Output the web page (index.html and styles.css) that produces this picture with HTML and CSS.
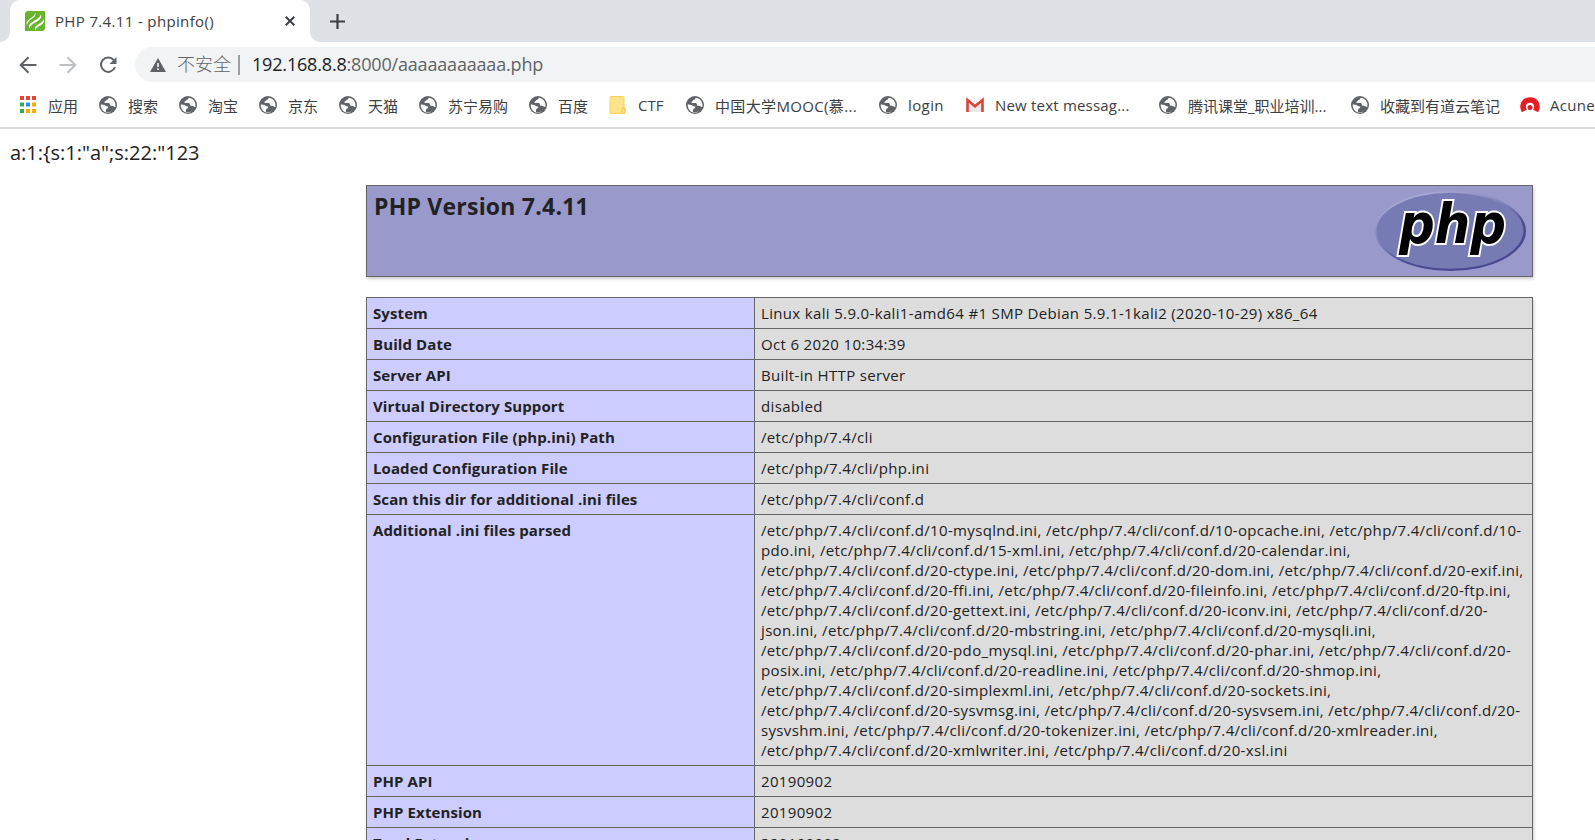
FILE: index.html
```html
<!DOCTYPE html>
<html lang="zh-CN">
<head>
    <meta charset="UTF-8">
    <title>PHP 7.4.11 - phpinfo()</title>
    <link rel="stylesheet" href="styles.css">
</head>
<body>
    <svg class="defs" width="0" height="0">
        <symbol id="globe" viewBox="0 0 18 18">
            <circle cx="9" cy="9" r="9" fill="#5f6368"/>
            <path d="M9.600 1.700c-.2 1.500-1.100 2.100-2.500 2.300-.3 1.300-.8 1.700-1.900 1.800.2 1 .8 1.300 1.900 1.300h2.300c1.600.1 1.500 1.500 1.700 2.400 1.100.3 2.500.1 3.600 1.100.9.700 1.500.6 1.700-.2C17 6 14.400 2.200 9.600 1.700zM1.700 8.500c1.500.1 3.300.3 4.600 1.100 1.100.6 1.500 1 2.900 1 .3 1.200-.5 2-1.800 2.200-.2 1.200-.6 2-.4 3.200 2 .7 4 .3 5.700-.8l-1.200 1.100C6.500 18 1.600 14.500 1.700 8.500z" fill="#fff"/>
        </symbol>
    </svg>

    <div class="tab-strip">
        <div class="tab-edge"></div>
        <div class="tab">
            <svg class="favicon" viewBox="0 0 20 20">
                <path d="M2 0h18v18l-2 2H0V2z" fill="#69b42e"/>
                <path d="M10.300 2c1.700 5-6.800 5-8.300 12C-.5 8.500 8.500 8 10.300 2zM16 3.500c2.500 7-9.500 7-11.500 14-3.500-6.500 9.500-7.500 11.500-14zM18.800 8c1.500 6.500-6.300 6-8.300 11.200C7.500 14 17 13.500 18.800 8z" fill="#fff"/>
            </svg>
            <span class="tab-title">PHP 7.4.11 - phpinfo()</span>
            <svg class="tab-close" viewBox="0 0 10 10"><path d="M.7.7l8.600 8.600M9.300.7L.7 9.300" stroke="#3c4043" stroke-width="2"/></svg>
        </div>
        <div class="tab-edge right"></div>
        <svg class="new-tab" viewBox="0 0 15 15"><path d="M7.500 0v15M0 7.500h15" stroke="#3c4043" stroke-width="2.200"/></svg>
    </div>

    <div class="toolbar">
        <svg class="nav-icon" viewBox="0 0 18 18"><path d="M17.500 9H2M9.500 1.200L1.700 9l7.800 7.800" fill="none" stroke="#5f6368" stroke-width="2"/></svg>
        <svg class="nav-icon" viewBox="0 0 18 18"><path d="M.5 9H16M8.500 1.200L16.300 9l-7.800 7.800" fill="none" stroke="#bdc1c6" stroke-width="2"/></svg>
        <svg class="nav-icon" viewBox="0 0 18 18"><path d="M14.800 4.200A7.200 7.200 0 1 0 16 11" fill="none" stroke="#5f6368" stroke-width="2"/><path d="M17.500 1v7H10.500z" fill="#5f6368"/></svg>
        <div class="address">
            <svg class="warning" viewBox="0 0 16 14"><path d="M8 0l8 14H0z" fill="#5f6368"/><path d="M8 5v4M8 10.300v1.800" stroke="#f1f3f4" stroke-width="1.600"/></svg>
            <span class="insecure">不安全</span>
            <span class="divider"></span>
            <span class="url"><span class="host">192.168.8.8</span>:8000/aaaaaaaaaaa.php</span>
        </div>
    </div>

    <div class="bookmarks">
        <div class="bookmark">
            <svg viewBox="0 0 18 18">
                <path d="M1 0h4v4H1zM7 0h4v4H7zM13 0h4v4h-4z" fill="#ea4335"/>
                <path d="M1 6.500h4v4H1zM1 13h4v4H1z" fill="#34a853"/>
                <path d="M7 6.500h4v4H7z" fill="#2a8cf0"/>
                <path d="M7 13h4v4H7zM13 6.500h4v4h-4zM13 13h4v4h-4z" fill="#f9ab00"/>
            </svg>
            <span>应用</span>
        </div>
        <div class="bookmark"><svg><use href="#globe"/></svg><span>搜索</span></div>
        <div class="bookmark"><svg><use href="#globe"/></svg><span>淘宝</span></div>
        <div class="bookmark"><svg><use href="#globe"/></svg><span>京东</span></div>
        <div class="bookmark"><svg><use href="#globe"/></svg><span>天猫</span></div>
        <div class="bookmark b-suning"><svg><use href="#globe"/></svg><span>苏宁易购</span></div>
        <div class="bookmark"><svg><use href="#globe"/></svg><span>百度</span></div>
        <div class="bookmark b-ctf">
            <svg viewBox="0 0 18 18"><path d="M2 .5h12q1 0 1 1V12h1v4.500q0 1-1 1H2q-1 0-1-1v-15q0-1 1-1z" fill="#ffe38a" stroke="#f7d160"/><path d="M13 17.500V13q0-1 1-1h2v4.500q0 1-1 1z" fill="#ffe38a" stroke="#f3c63f"/></svg>
            <span>CTF</span>
        </div>
        <div class="bookmark b-mooc"><svg><use href="#globe"/></svg><span>中国大学MOOC(慕...</span></div>
        <div class="bookmark b-login"><svg><use href="#globe"/></svg><span>login</span></div>
        <div class="bookmark b-mail">
            <svg viewBox="0 0 18 18"><path d="M1 3h16v13H1z" fill="#e9e9e9"/><path d="M1 3h16L9 9.500z" fill="#fafafa"/><path d="M1.500 16V4L9 10.300 16.500 4v12" fill="none" stroke="#db4437" stroke-width="2.600"/></svg>
            <span>New text messag...</span>
        </div>
        <div class="bookmark b-tencent"><svg><use href="#globe"/></svg><span>腾讯课堂_职业培训...</span></div>
        <div class="bookmark b-youdao"><svg><use href="#globe"/></svg><span>收藏到有道云笔记</span></div>
        <div class="bookmark b-acu">
            <svg viewBox="0 0 20 18"><path d="M4.300 15C1.300 9.500 4 4 10 4s8.700 5.500 5.700 11" fill="none" stroke="#e31e26" stroke-width="5.600"/><circle cx="10" cy="11.500" r="2.500" fill="#e31e26"/></svg>
            <span>Acune</span>
        </div>
    </div>

    <div class="page">
        <div class="output">a:1:{s:1:"a";s:22:"123</div>
        <div class="center">
            <div class="header">
                <h1>PHP Version 7.4.11</h1>
                <svg class="php-logo" viewBox="0 0 151 80">
                    <defs>
                        <linearGradient id="rim" x1="0.2" y1="0" x2="0.8" y2="1">
                            <stop offset="0" stop-color="#b4b5dc"/>
                            <stop offset="0.45" stop-color="#777bb3"/>
                            <stop offset="0.65" stop-color="#484990"/>
                            <stop offset="1" stop-color="#484990"/>
                        </linearGradient>
                    </defs>
                    <ellipse cx="75.500" cy="40" rx="75.500" ry="40" fill="url(#rim)"/>
                    <ellipse cx="75" cy="39.800" rx="73.500" ry="38" fill="#777bb3"/>
                    <text x="24" y="52" textLength="107" lengthAdjust="spacingAndGlyphs">php</text>
                </svg>
            </div>
            <table>
                <tr><td class="e">System</td><td class="v">Linux kali 5.9.0-kali1-amd64 #1 SMP Debian 5.9.1-1kali2 (2020-10-29) x86_64</td></tr>
                <tr><td class="e">Build Date</td><td class="v">Oct 6 2020 10:34:39</td></tr>
                <tr><td class="e">Server API</td><td class="v">Built-in HTTP server</td></tr>
                <tr><td class="e">Virtual Directory Support</td><td class="v">disabled</td></tr>
                <tr><td class="e">Configuration File (php.ini) Path</td><td class="v">/etc/php/7.4/cli</td></tr>
                <tr><td class="e">Loaded Configuration File</td><td class="v">/etc/php/7.4/cli/php.ini</td></tr>
                <tr><td class="e">Scan this dir for additional .ini files</td><td class="v">/etc/php/7.4/cli/conf.d</td></tr>
                <tr><td class="e">Additional .ini files parsed</td><td class="v">/etc/php/7.4/cli/conf.d/10-mysqlnd.ini, /etc/php/7.4/cli/conf.d/10-opcache.ini, /etc/php/7.4/cli/conf.d/10-<br>
                    pdo.ini, /etc/php/7.4/cli/conf.d/15-xml.ini, /etc/php/7.4/cli/conf.d/20-calendar.ini,<br>
                    /etc/php/7.4/cli/conf.d/20-ctype.ini, /etc/php/7.4/cli/conf.d/20-dom.ini, /etc/php/7.4/cli/conf.d/20-exif.ini,<br>
                    /etc/php/7.4/cli/conf.d/20-ffi.ini, /etc/php/7.4/cli/conf.d/20-fileinfo.ini, /etc/php/7.4/cli/conf.d/20-ftp.ini,<br>
                    /etc/php/7.4/cli/conf.d/20-gettext.ini, /etc/php/7.4/cli/conf.d/20-iconv.ini, /etc/php/7.4/cli/conf.d/20-<br>
                    json.ini, /etc/php/7.4/cli/conf.d/20-mbstring.ini, /etc/php/7.4/cli/conf.d/20-mysqli.ini,<br>
                    /etc/php/7.4/cli/conf.d/20-pdo_mysql.ini, /etc/php/7.4/cli/conf.d/20-phar.ini, /etc/php/7.4/cli/conf.d/20-<br>
                    posix.ini, /etc/php/7.4/cli/conf.d/20-readline.ini, /etc/php/7.4/cli/conf.d/20-shmop.ini,<br>
                    /etc/php/7.4/cli/conf.d/20-simplexml.ini, /etc/php/7.4/cli/conf.d/20-sockets.ini,<br>
                    /etc/php/7.4/cli/conf.d/20-sysvmsg.ini, /etc/php/7.4/cli/conf.d/20-sysvsem.ini, /etc/php/7.4/cli/conf.d/20-<br>
                    sysvshm.ini, /etc/php/7.4/cli/conf.d/20-tokenizer.ini, /etc/php/7.4/cli/conf.d/20-xmlreader.ini,<br>
                    /etc/php/7.4/cli/conf.d/20-xmlwriter.ini, /etc/php/7.4/cli/conf.d/20-xsl.ini</td></tr>
                <tr><td class="e">PHP API</td><td class="v">20190902</td></tr>
                <tr><td class="e">PHP Extension</td><td class="v">20190902</td></tr>
                <tr><td class="e">Zend Extension</td><td class="v">320190902</td></tr>
            </table>
        </div>
    </div>
</body>
</html>
```
FILE: styles.css
```css
html, body {
    height: 100%;
    margin: 0;
    overflow: hidden;
}

body {
    display: flex;
    flex-direction: column;
    background: #fff;
    color: #222;
    font-family: "Open Sans", "Noto Sans CJK SC", sans-serif;
}

svg {
    flex: none;
    display: block;
}

.defs {
    position: absolute;
}

/* browser chrome */
.tab-strip {
    display: flex;
    flex: none;
    height: 42px;
    background: #dee1e6;
}

.tab-edge {
    align-self: flex-end;
    width: 10px;
    height: 10px;
    background: radial-gradient(circle at 0 0, #dee1e6 9.5px, #fff 10px);
}

.tab-edge.right {
    background: radial-gradient(circle at 10px 0, #dee1e6 9.5px, #fff 10px);
}

.tab {
    display: flex;
    align-items: center;
    box-sizing: border-box;
    width: 300px;
    padding: 0 15px;
    background: #fff;
    border-radius: 10px 10px 0 0;
}

.favicon {
    width: 20px;
    height: 20px;
}

.tab-title {
    flex: 1;
    margin-left: 10px;
    font-size: 15px;
    letter-spacing: 0.35px;
    color: #3c4043;
}

.tab-close {
    width: 10px;
    height: 10px;
}

.new-tab {
    width: 15px;
    height: 15px;
    margin: 14px 0 0 10px;
}

.toolbar {
    display: flex;
    flex: none;
    align-items: center;
    height: 45px;
    padding-left: 19px;
}

.nav-icon {
    width: 18px;
    height: 18px;
    margin-right: 22px;
}

.address {
    display: flex;
    flex: 1;
    align-items: center;
    height: 35px;
    margin-left: -4px;
    padding-left: 15px;
    background: #f1f3f4;
    border-radius: 18px 0 0 18px;
    font-size: 18px;
    line-height: 24px;
    color: #5f6368;
}

.warning {
    width: 16px;
    height: 14px;
}

.insecure {
    margin-left: 11px;
    padding-bottom: 2px;
    font-weight: 300;
}

.divider {
    width: 2px;
    height: 20px;
    margin: 0 12px 0 7px;
    background: #9aa0a6;
}

.url {
    padding-bottom: 2px;
    letter-spacing: -0.18px;
}

.host {
    color: #202124;
}

.bookmarks {
    display: flex;
    flex: none;
    align-items: center;
    box-sizing: border-box;
    height: 42px;
    padding: 0 0 4px 19px;
    border-bottom: 2px solid #dadce0;
    font-size: 15px;
    color: #3c4043;
    white-space: nowrap;
    overflow: hidden;
}

.bookmark {
    display: flex;
    flex: none;
    align-items: center;
    gap: 11px;
    width: 80px;
}

.bookmark svg {
    width: 18px;
    height: 18px;
}

.b-suning { width: 110px; }
.b-ctf { width: 77px; }
.b-mooc { width: 193px; letter-spacing: 0.35px; }
.b-login { width: 87px; letter-spacing: 0.4px; }
.b-mail { width: 193px; letter-spacing: 0.2px; }
.b-tencent { width: 192px; }
.b-youdao { width: 169px; }
.b-acu { gap: 10px; letter-spacing: 0.3px; }

.b-acu svg {
    width: 20px;
}

/* phpinfo() page */
.page {
    padding: 10px 62px 0 10px;
}

.output {
    height: 46px;
    font-size: 20px;
    line-height: 28px;
}

.center {
    width: 1167px;
    margin-left: 356px;
}

.header {
    display: flex;
    justify-content: space-between;
    box-sizing: border-box;
    height: 92px;
    margin-bottom: 20px;
    padding: 5px 6px 5px 7px;
    background: #99c;
    border: 1px solid #666;
    box-shadow: 1px 2px 3px #ccc;
}

h1 {
    margin: -1px 0 0;
    font-size: 23px;
    line-height: 32px;
    letter-spacing: 0.22px;
}

.php-logo {
    width: 151px;
    height: 80px;
}

.php-logo text {
    font: italic bold 55px "DejaVu Sans", sans-serif;
    fill: #000;
    stroke: #fff;
    stroke-width: 4px;
    paint-order: stroke;
}

table {
    width: 1167px;
    border-collapse: collapse;
    table-layout: fixed;
    box-shadow: 1px 2px 3px #ccc;
}

td {
    padding: 5px 6px;
    border: 1px solid #666;
    font-size: 15px;
    line-height: 20px;
    vertical-align: baseline;
}

.e {
    width: 375px;
    background: #ccf;
    font-weight: bold;
    letter-spacing: 0.1px;
}

.v {
    background: #ddd;
    letter-spacing: 0.34px;
    white-space: nowrap;
}
```
